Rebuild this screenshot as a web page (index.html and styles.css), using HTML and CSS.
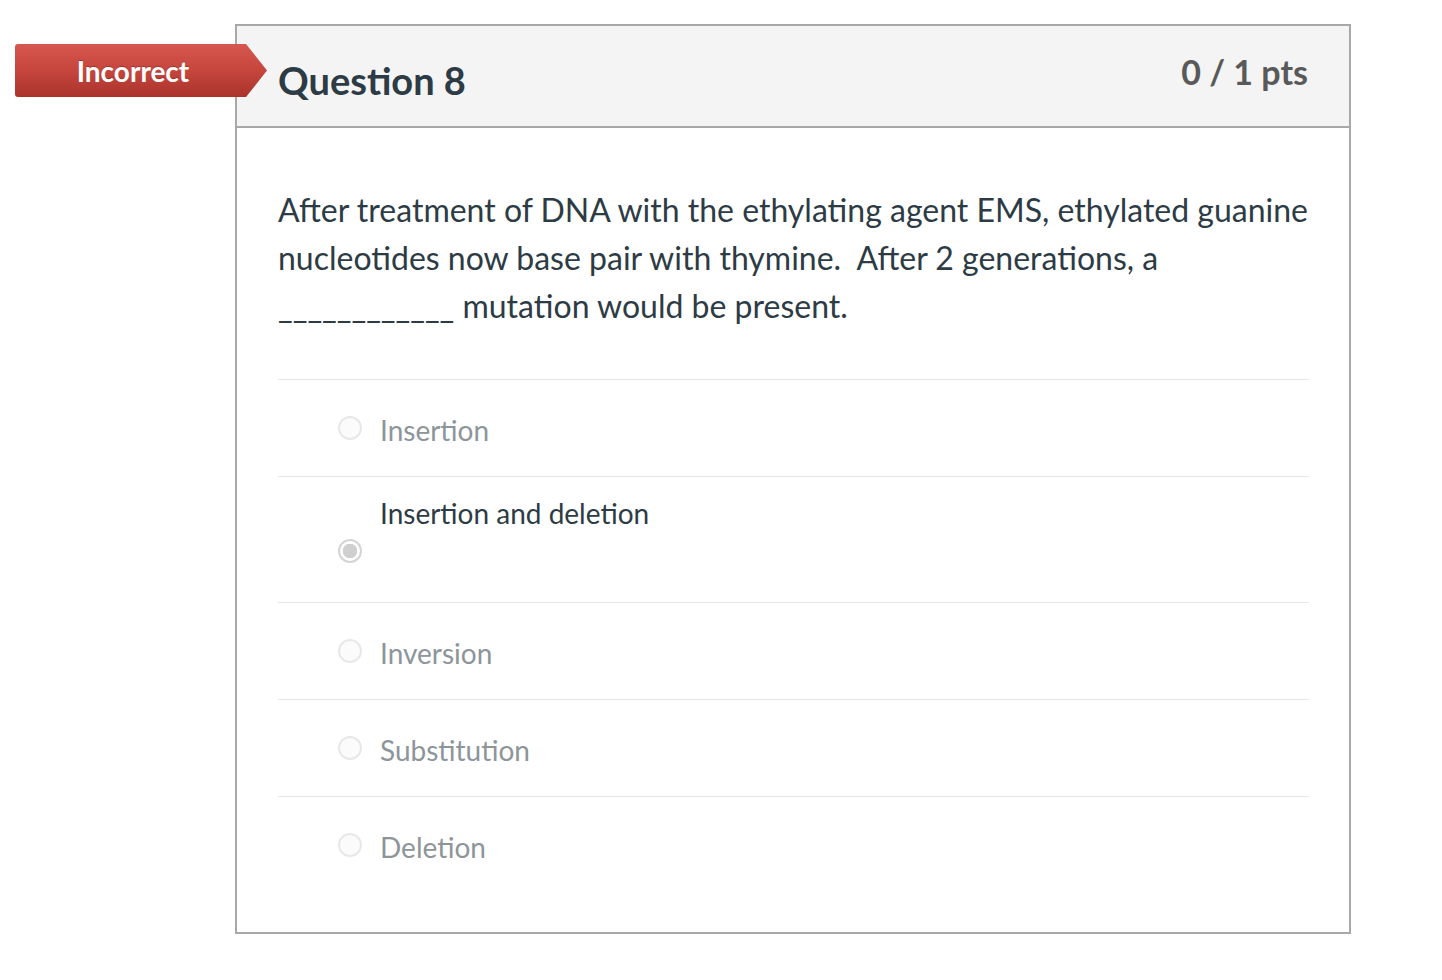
FILE: index.html
```html
<!DOCTYPE html>
<html lang="en">
<head>
<meta charset="utf-8">
<title>Question 8</title>
<link rel="stylesheet" href="styles.css">
</head>
<body>
<div class="page">
  <div class="result-flag">Incorrect</div>
  <div class="question-card">
    <div class="question-header">
      <h2 class="question-title">Question 8</h2>
      <div class="question-points">0 / 1 pts</div>
    </div>
    <div class="question-body">
      <p class="question-text">After treatment of DNA with the ethylating agent EMS, ethylated guanine nucleotides now base pair with thymine.&nbsp; After 2 generations, a ____________ mutation would be present.</p>
      <div class="answers">
        <div class="answer">
          <span class="radio"></span>
          <span class="answer-label">Insertion</span>
        </div>
        <div class="answer answer-selected">
          <span class="radio radio-checked"></span>
          <span class="answer-label">Insertion and deletion</span>
        </div>
        <div class="answer">
          <span class="radio"></span>
          <span class="answer-label">Inversion</span>
        </div>
        <div class="answer">
          <span class="radio"></span>
          <span class="answer-label">Substitution</span>
        </div>
        <div class="answer">
          <span class="radio"></span>
          <span class="answer-label">Deletion</span>
        </div>
      </div>
    </div>
  </div>
</div>
</body>
</html>
```
FILE: styles.css
```css
html, body {
  margin: 0;
  padding: 0;
  background: #ffffff;
}

body {
  font-family: Lato, "Open Sans", "Liberation Sans", sans-serif;
  color: #2d3b45;
}

.page {
  position: relative;
  padding: 24px 0 0 235px;
}

.result-flag {
  position: absolute;
  left: 15px;
  top: 44px;
  width: 252px;
  height: 53px;
  box-sizing: border-box;
  padding-right: 16px;
  display: flex;
  align-items: center;
  justify-content: center;
  background: linear-gradient(to bottom, #d6574e 0%, #c6463d 50%, #a9332b 100%);
  border-radius: 3px 0 0 3px;
  clip-path: polygon(0 0, 231px 0, 252px 50%, 231px 100%, 0 100%);
  color: #ffffff;
  font-size: 28px;
  font-weight: 700;
  text-shadow: 0 -1px 0 rgba(0, 0, 0, 0.25);
  z-index: 2;
}

.question-card {
  width: 1116px;
  box-sizing: border-box;
  border: 2px solid #a8a8a8;
  background: #ffffff;
}

.question-header {
  height: 100px;
  background: #f4f4f4;
  border-bottom: 2px solid #a8a8a8;
  display: flex;
  justify-content: space-between;
  align-items: flex-start;
  padding: 0 41px;
}

.question-title {
  margin: 32px 0 0 0;
  font-size: 38px;
  font-weight: 700;
  line-height: 1.2;
  color: #2d3b45;
}

.question-points {
  margin-top: 26px;
  font-size: 34px;
  font-weight: 700;
  line-height: 1.2;
  color: #595959;
}

.question-body {
  padding: 58px 40px 39px 41px;
}

.question-text {
  margin: 0 0 49px 0;
  font-size: 32px;
  line-height: 48px;
  color: #2d3b45;
}

.answers {
  border-top: 1px solid #e6e6e6;
}

.answer {
  display: flex;
  align-items: center;
  gap: 18px;
  min-height: 96px;
  box-sizing: border-box;
  padding: 24px 0 24px 60px;
  border-bottom: 1px solid #e6e6e6;
}

.answer:last-child {
  border-bottom: none;
}

.answer-label {
  font-size: 28px;
  line-height: 48px;
  margin: 2px 0 -2px 0;
  color: #8d959b;
}

.radio {
  flex: 0 0 auto;
  width: 24px;
  height: 24px;
  box-sizing: border-box;
  border-radius: 50%;
  border: 2px solid #e8e8e8;
  background: #fbfbfb;
}

.answer-selected {
  align-items: flex-start;
  padding: 12px 0 39px 60px;
}

.answer-selected .answer-label {
  margin: 0;
  color: #2d3b45;
}

.radio-checked {
  margin-top: 50px;
  border: 2px solid #d4d4d4;
  background: radial-gradient(circle, #cfcfcf 0, #cfcfcf 7px, #ffffff 7.5px);
}
```
